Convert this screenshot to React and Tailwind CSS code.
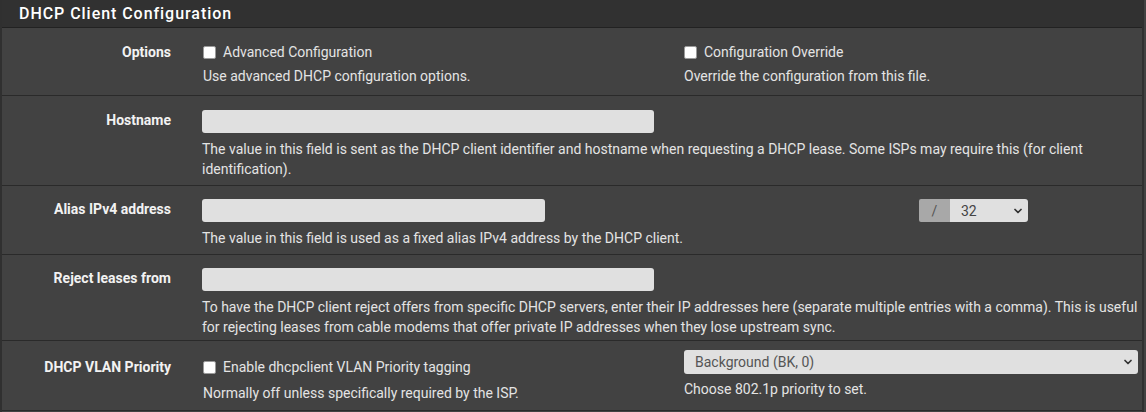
import React from 'react';
import { ChevronDown } from 'lucide-react';

const Checkbox = ({ label }) => (
    <label className="flex items-center gap-[7px] h-[20px]">
        <span className="w-[13px] h-[13px] bg-white border border-[#9a9a9a] rounded-[2px]"></span>
        <span>{label}</span>
    </label>
);

const Row = ({ label, className, children }) => (
    <div className={`flex border-b border-[#2a2a2a] ${className}`}>
        <div className="w-[190px] shrink-0 pr-[21px] text-right font-bold text-[#f2f2f2]">{label}</div>
        <div className="flex-1 min-w-0">{children}</div>
    </div>
);

const TextInput = ({ w }) => (
    <div className={`h-[23px] bg-[#e0e0e0] rounded-[3px] ${w}`}></div>
);

export default function App() {
    return (
        <div className="w-[1146px] h-[412px] bg-[#424242] font-['Roboto',sans-serif] text-[14px] leading-[20px] text-[#e4e4e4] overflow-hidden">
            <div className="w-[1144px] h-full border-l-[2px] border-r-[2px] border-[#303030]">
                {/* Panel heading */}
                <div className="h-[28px] bg-[#313131] border-b border-[#222] pl-[17px] flex items-center">
                    <h2 className="text-[16px] font-medium tracking-[0.95px] text-white">DHCP Client Configuration</h2>
                </div>

                {/* Options */}
                <Row label="Options" className="h-[68px] pt-[14px]">
                    <div className="flex">
                        <div className="w-[481px] pl-[11px]">
                            <Checkbox label="Advanced Configuration" />
                            <p className="mt-[4px]">Use advanced DHCP configuration options.</p>
                        </div>
                        <div className="pl-[11px]">
                            <Checkbox label="Configuration Override" />
                            <p className="mt-[4px]">Override the configuration from this file.</p>
                        </div>
                    </div>
                </Row>

                {/* Hostname */}
                <Row label="Hostname" className="h-[90px] pt-[14px]">
                    <div className="pl-[10px] pr-[40px]">
                        <TextInput w="w-[452px]" />
                        <p className="mt-[6px]">
                            The value in this field is sent as the DHCP client identifier and hostname when requesting a DHCP lease. Some ISPs may require this (for client identification).
                        </p>
                    </div>
                </Row>

                {/* Alias IPv4 */}
                <Row label="Alias IPv4 address" className="h-[69px] pt-[13px]">
                    <div className="pl-[10px]">
                        <div className="flex items-center">
                            <TextInput w="w-[343px]" />
                            <div className="ml-[374px] flex h-[23px]">
                                <span className="w-[31px] bg-[#a8a8a8] text-[#555] flex items-center justify-center rounded-l-[2px]">/</span>
                                <div className="w-[78px] bg-[#e0e0e0] rounded-r-[3px] flex items-center justify-between pl-[11px] pr-[4px] text-[#444]">
                                    <span>32</span>
                                    <ChevronDown size={12} strokeWidth={3.5} className="text-[#333]" />
                                </div>
                            </div>
                        </div>
                        <p className="mt-[6px]">The value in this field is used as a fixed alias IPv4 address by the DHCP client.</p>
                    </div>
                </Row>

                {/* Reject leases */}
                <Row label="Reject leases from" className="h-[86px] pt-[13px]">
                    <div className="pl-[10px] pr-[4px]">
                        <TextInput w="w-[452px]" />
                        <p className="mt-[6px]">
                            To have the DHCP client reject offers from specific DHCP servers, enter their IP addresses here (separate multiple entries with a comma). This is useful for rejecting leases from cable modems that offer private IP addresses when they lose upstream sync.
                        </p>
                    </div>
                </Row>

                {/* VLAN priority */}
                <Row label="DHCP VLAN Priority" className="h-[70px] pt-[16px]">
                    <div className="flex">
                        <div className="w-[481px] pl-[11px]">
                            <Checkbox label="Enable dhcpclient VLAN Priority tagging" />
                            <p className="mt-[6px]">Normally off unless specifically required by the ISP.</p>
                        </div>
                        <div className="pl-[11px] -mt-[7px]">
                            <div className="w-[454px] h-[24px] bg-[#e0e0e0] rounded-[3px] flex items-center justify-between pl-[11px] pr-[4px] text-[#555]">
                                <span>Background (BK, 0)</span>
                                <ChevronDown size={12} strokeWidth={3.5} className="text-[#333]" />
                            </div>
                            <p className="mt-[5px]">Choose 802.1p priority to set.</p>
                        </div>
                    </div>
                </Row>
            </div>
        </div>
    );
}
